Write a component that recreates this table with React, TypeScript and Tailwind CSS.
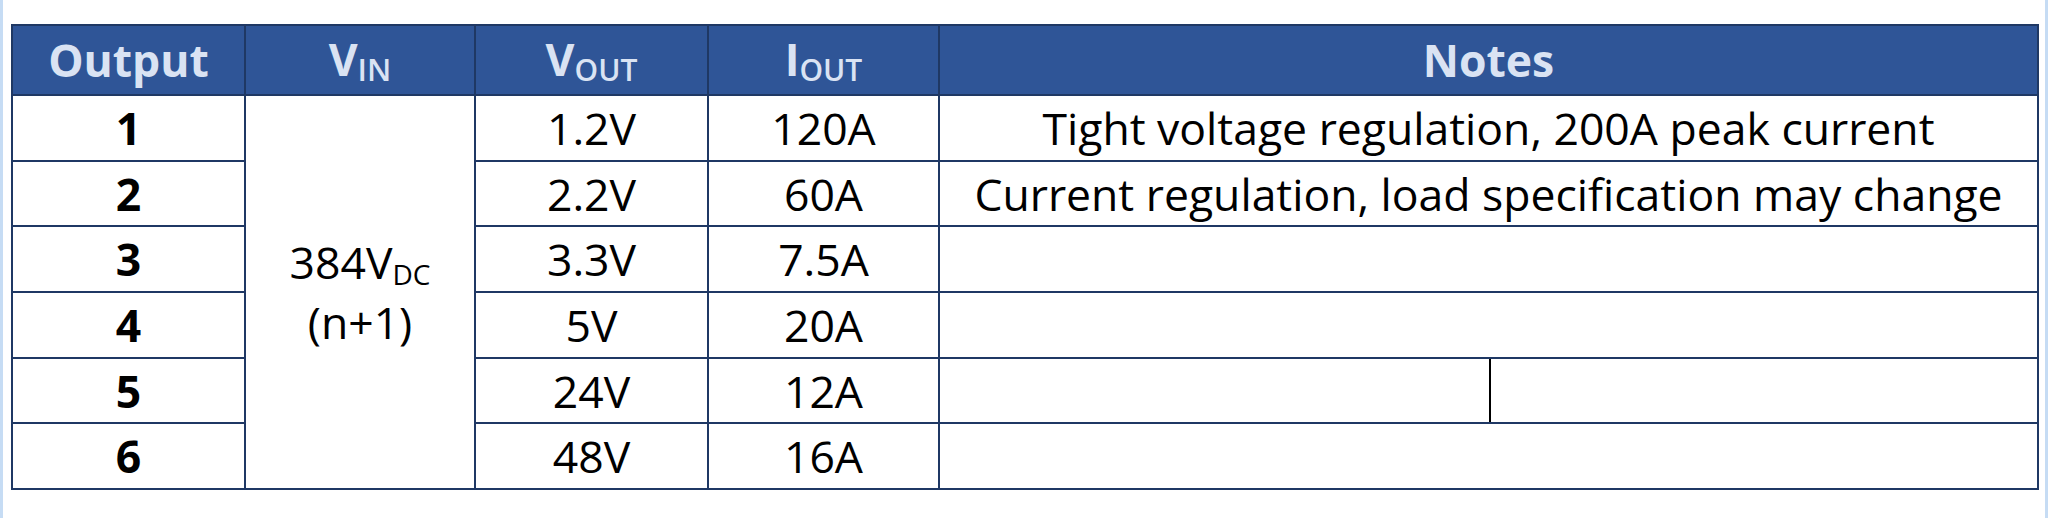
import React from "react"

type Row = { n: string; v: string; i: string; note?: string; split?: boolean }

const rows: Row[] = [
  { n: "1", v: "1.2V", i: "120A", note: "Tight voltage regulation, 200A peak current" },
  { n: "2", v: "2.2V", i: "60A", note: "Current regulation, load specification may change" },
  { n: "3", v: "3.3V", i: "7.5A" },
  { n: "4", v: "5V", i: "20A" },
  { n: "5", v: "24V", i: "12A", split: true },
  { n: "6", v: "48V", i: "16A" },
]

const cell = "border-2 border-[#1f3864] p-0 text-center align-middle whitespace-nowrap"
const head = `${cell} bg-[#2f5597] text-[#dae3f3] font-bold`

const App = () => {
  return (
    <div className="w-[2048px] h-[518px] bg-white border-l-[3px] border-r-[3px] border-[#c6dcf4] pt-[24px] px-[8px] font-['Open_Sans',sans-serif] text-black">
      <table className="table-fixed border-collapse w-[2026px] text-[44.5px] leading-[1.2]">
        <colgroup>
          <col className="w-[233px]" />
          <col className="w-[230px]" />
          <col className="w-[233px]" />
          <col className="w-[231px]" />
          <col className="w-[551px]" />
          <col className="w-[548px]" />
        </colgroup>
        <thead>
          <tr className="h-[70px]">
            <th className={head}>Output</th>
            <th className={head}>
              V<span className="text-[31px] font-semibold align-[-5px]">IN</span>
            </th>
            <th className={head}>
              V<span className="text-[30px] font-semibold align-[-5px]">OUT</span>
            </th>
            <th className={head}>
              I<span className="text-[30px] font-semibold align-[-5px]">OUT</span>
            </th>
            <th className={head} colSpan={2}>
              Notes
            </th>
          </tr>
        </thead>
        <tbody>
          {rows.map((r, idx) => (
            <tr key={r.n} className="h-[65.67px]">
              <td className={`${cell} font-bold`}>{r.n}</td>
              {idx === 0 && (
                <td className={cell} rowSpan={6}>
                  <div className="flex flex-col items-center gap-[10px]">
                    <div className="leading-[48px]">
                      384V<span className="text-[28px] leading-none align-[-6px]">DC</span>
                    </div>
                    <div className="leading-[48px]">(n+1)</div>
                  </div>
                </td>
              )}
              <td className={cell}>{r.v}</td>
              <td className={cell}>{r.i}</td>
              {r.split ? (
                <>
                  <td className={`${cell} border-r-black`}></td>
                  <td className={cell}></td>
                </>
              ) : (
                <td className={cell} colSpan={2}>
                  {r.note}
                </td>
              )}
            </tr>
          ))}
        </tbody>
      </table>
    </div>
  )
}

export default App
